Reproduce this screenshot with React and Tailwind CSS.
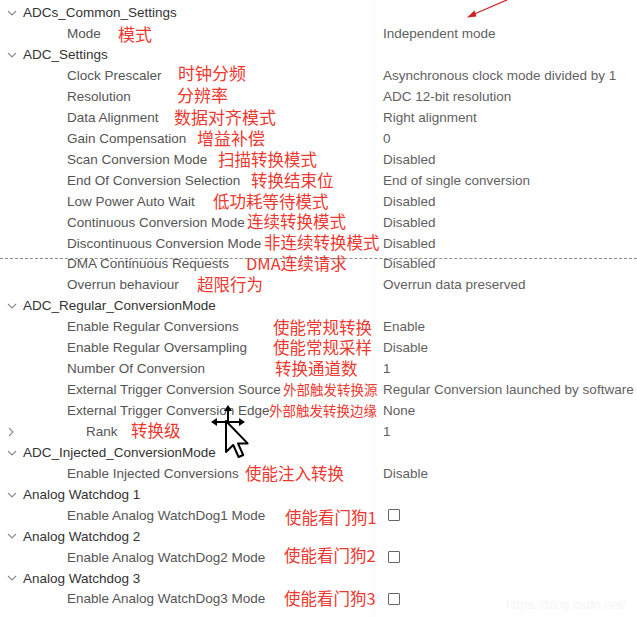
import React from "react";

const rows = [
  { t: "g", label: "ADCs_Common_Settings" },
  { t: "c", label: "Mode", value: "Independent mode", note: "模式", nc: "left-[118px] text-[17px]" },
  { t: "g", label: "ADC_Settings" },
  { t: "c", label: "Clock Prescaler", value: "Asynchronous clock mode divided by 1", note: "时钟分频", nc: "left-[178px] text-[17px] -top-[3px]" },
  { t: "c", label: "Resolution", value: "ADC 12-bit resolution", note: "分辨率", nc: "left-[177px] text-[17px] -top-[2px]" },
  { t: "c", label: "Data Alignment", value: "Right alignment", note: "数据对齐模式", nc: "left-[174px] text-[17px] -top-[1px]" },
  { t: "c", label: "Gain Compensation", value: "0", note: "增益补偿", nc: "left-[197px] text-[17px] -top-[1px]" },
  { t: "c", label: "Scan Conversion Mode", value: "Disabled", note: "扫描转换模式", nc: "left-[218px] text-[16.5px]" },
  { t: "c", label: "End Of Conversion Selection", value: "End of single conversion", note: "转换结束位", nc: "left-[251px] text-[16.5px]" },
  { t: "c", label: "Low Power Auto Wait", value: "Disabled", note: "低功耗等待模式", nc: "left-[213px] text-[16.5px]" },
  { t: "c", label: "Continuous Conversion Mode", value: "Disabled", note: "连续转换模式", nc: "left-[247px] text-[16.5px] -top-[1px]" },
  { t: "c", label: "Discontinuous Conversion Mode", value: "Disabled", note: "非连续转换模式", nc: "left-[264px] text-[16.5px] -top-[1px]" },
  { t: "c", label: "DMA Continuous Requests", value: "Disabled", note: "DMA连续请求", nc: "left-[246px] text-[16.5px] -top-[1px]" },
  { t: "c", label: "Overrun behaviour", value: "Overrun data preserved", note: "超限行为", nc: "left-[197px] text-[16.5px] -top-[1px]" },
  { t: "g", label: "ADC_Regular_ConversionMode" },
  { t: "c", label: "Enable Regular Conversions", value: "Enable", note: "使能常规转换", nc: "left-[273px] text-[16.5px]" },
  { t: "c", label: "Enable Regular Oversampling", value: "Disable", note: "使能常规采样", nc: "left-[273px] text-[16.5px] -top-[1px]" },
  { t: "c", label: "Number Of Conversion", value: "1", note: "转换通道数", nc: "left-[275px] text-[16.5px] -top-[1px]" },
  { t: "c", label: "External Trigger Conversion Source", value: "Regular Conversion launched by software", note: "外部触发转换源", nc: "left-[283px] text-[13.5px]" },
  { t: "c", label: "External Trigger Conversion Edge", value: "None", note: "外部触发转换边缘", nc: "left-[269px] text-[13.5px]" },
  { t: "r", label: "Rank", value: "1", note: "转换级", nc: "left-[131px] text-[16.5px] -top-[1px]" },
  { t: "g", label: "ADC_Injected_ConversionMode" },
  { t: "c", label: "Enable Injected Conversions", value: "Disable", note: "使能注入转换", nc: "left-[245px] text-[16.5px]" },
  { t: "g", label: "Analog Watchdog 1" },
  { t: "c", label: "Enable Analog WatchDog1 Mode", check: true, note: "使能看门狗1", nc: "left-[285px] text-[16.5px] top-[2px]" },
  { t: "g", label: "Analog Watchdog 2" },
  { t: "c", label: "Enable Analog WatchDog2 Mode", check: true, note: "使能看门狗2", nc: "left-[284px] text-[16.5px] -top-[2px]" },
  { t: "g", label: "Analog Watchdog 3" },
  { t: "c", label: "Enable Analog WatchDog3 Mode", check: true, note: "使能看门狗3", nc: "left-[284px] text-[16.5px] -top-[1px]" },
];

function ChevronDown() {
  return (
    <svg width="10" height="6" viewBox="0 0 10 6" className="shrink-0">
      <path d="M1 1 L5 5 L9 1" fill="none" stroke="#8a8a8a" strokeWidth="1.1" />
    </svg>
  );
}

function ChevronRight() {
  return (
    <svg width="6" height="10" viewBox="0 0 6 10" className="shrink-0">
      <path d="M1 1 L5 5 L1 9" fill="none" stroke="#8a8a8a" strokeWidth="1.1" />
    </svg>
  );
}

function Row({ r }) {
  return (
    <div className="relative h-[20.95px] flex items-center">
      {r.t === "g" && (
        <div className="flex items-center">
          <div className="w-[23px] flex justify-center">
            <div className="pl-[1px]"><ChevronDown /></div>
          </div>
          <span className="text-[13.5px] text-[#333333] leading-none">{r.label}</span>
        </div>
      )}
      {r.t === "c" && (
        <span className="pl-[67px] text-[13.5px] text-[#555555] leading-none whitespace-nowrap">{r.label}</span>
      )}
      {r.t === "r" && (
        <div className="flex items-center">
          <div className="w-[86px] pl-[8px] flex items-center">
            <ChevronRight />
          </div>
          <span className="text-[13.5px] text-[#555555] leading-none">{r.label}</span>
        </div>
      )}
      {r.note && (
        <span
          className={
            "absolute h-full flex items-center whitespace-nowrap text-[#ec3830] leading-none " + r.nc
          }
          style={{ fontFamily: '"Noto Sans CJK SC", "Liberation Sans", sans-serif' }}
        >
          {r.note}
        </span>
      )}
      {r.value && (
        <span className="absolute left-[383px] text-[13.5px] text-[#5f5f5f] leading-none whitespace-nowrap">
          {r.value}
        </span>
      )}
      {r.check && (
        <span className="absolute left-[388px] top-[4px] w-[12px] h-[12px] border border-[#666666] rounded-[1px] bg-white" />
      )}
    </div>
  );
}

export default function App() {
  return (
    <div
      className="relative w-[637px] h-[617px] bg-white overflow-hidden"
      style={{ fontFamily: '"Liberation Sans", Arial, "Noto Sans CJK SC", sans-serif' }}
    >
      <div className="absolute left-[374px] top-0 bottom-0 w-px bg-[#f7f7f7]" />
      <div className="pt-[2.5px] flex flex-col relative">
        {rows.map((r, i) => (
          <Row key={i} r={r} />
        ))}
      </div>

      {/* dashed separator */}
      <div className="absolute left-0 right-0 top-[258px] border-t border-dashed border-[#8c8c8c]" />

      {/* red arrow annotation */}
      <svg className="absolute left-[460px] top-0" width="60" height="24" viewBox="0 0 60 24">
        <line x1="47" y1="0" x2="12" y2="15" stroke="#cc2222" strokeWidth="1.3" />
        <path d="M7 17.5 L14.5 10.5 L16.5 16.5 Z" fill="#cc2222" />
      </svg>

      {/* move cursor */}
      <svg className="absolute left-[208px] top-[402px]" width="40" height="40" viewBox="0 0 40 40">
        <g stroke="#000" strokeWidth="2" fill="#000">
          <line x1="20" y1="7" x2="20" y2="20" />
          <line x1="6" y1="20" x2="34" y2="20" />
        </g>
        <path d="M20 3 L16 9 L24 9 Z" fill="#000" />
        <path d="M3 20 L9 16 L9 24 Z" fill="#000" />
        <path d="M37 20 L31 16 L31 24 Z" fill="#000" />
      </svg>

      {/* arrow pointer */}
      <svg className="absolute left-[224px] top-[419px]" width="26" height="40" viewBox="0 0 13 20">
        <path
          d="M1 1 L1 16.5 L4.6 13 L7.3 19 L9.6 18 L7 12.2 L11.8 12.2 Z"
          fill="#fff"
          stroke="#000"
          strokeWidth="1"
          strokeLinejoin="round"
        />
      </svg>

      {/* faint watermark */}
      <span className="absolute left-[506px] top-[598px] text-[13px] text-[#f5f5f5] leading-none whitespace-nowrap">
        https://blog.csdn.net/
      </span>
    </div>
  );
}
